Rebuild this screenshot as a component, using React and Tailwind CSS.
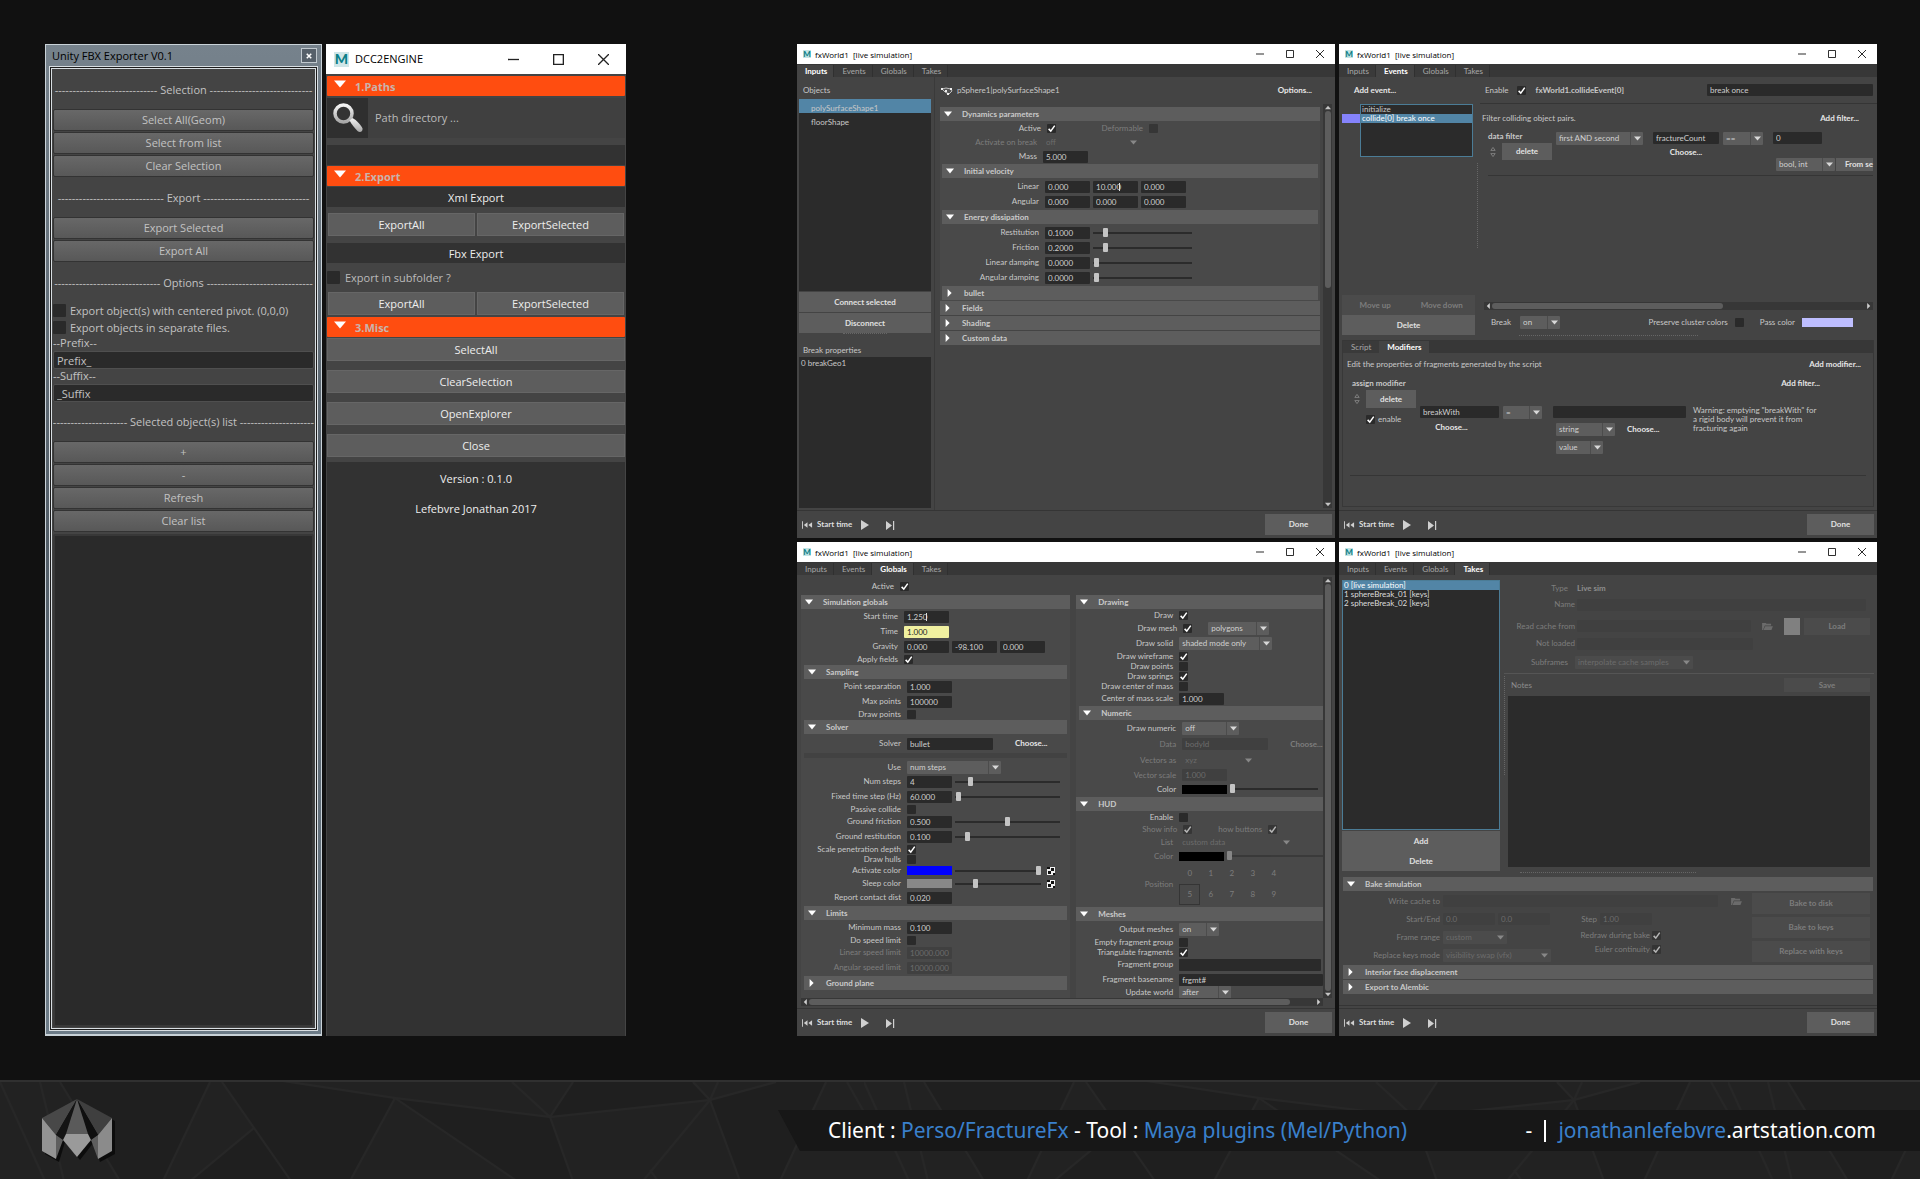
import clsx from "clsx";

/* ---------- shared bits ---------- */

function Triangle({ open = true, className }) {
  return (
    <svg viewBox="0 0 10 10" className={clsx("shrink-0", className)} aria-hidden="true">
      <path d={open ? "M0 2h10L5 8z" : "M2 0v10l5-5z"} fill="currentColor" />
    </svg>
  );
}

function WindowButtons({ size = "w-[30px]", icon = "h-2 w-2" }) {
  return (
    <div className="ml-auto flex h-full text-[#222]">
      <button aria-label="Minimize" className={clsx("flex items-center justify-center", size)}>
        <svg viewBox="0 0 10 10" className={icon}><path d="M0 5h10" stroke="currentColor" strokeWidth="1.2" /></svg>
      </button>
      <button aria-label="Maximize" className={clsx("flex items-center justify-center", size)}>
        <svg viewBox="0 0 10 10" className={icon}><path d="M.6.6h8.8v8.8H.6z" fill="none" stroke="currentColor" strokeWidth="1.2" /></svg>
      </button>
      <button aria-label="Close" className={clsx("flex items-center justify-center", size)}>
        <svg viewBox="0 0 10 10" className={icon}><path d="M0 0l10 10M10 0L0 10" stroke="currentColor" strokeWidth="1.2" /></svg>
      </button>
    </div>
  );
}

function Check({ id, on, label, disabled, big }) {
  const size = big ? "h-[13px] w-[13px]" : "h-[9px] w-[9px]";
  return (
    <span className={clsx("relative block shrink-0", size, disabled && "opacity-60")}>
      <input
        id={id}
        type="checkbox"
        aria-label={label}
        defaultChecked={on}
        disabled={disabled}
        className={clsx("peer block appearance-none rounded-[1px] bg-[#2a2a2a]", size)}
      />
      <svg viewBox="0 0 10 10" className="pointer-events-none absolute inset-0 hidden peer-checked:block" aria-hidden="true">
        <path d="M1.8 5.4l2.4 2.5L8.6 1.8" fill="none" stroke="#fff" strokeWidth="1.7" />
      </svg>
    </span>
  );
}

function Field({ id, value = "", label, className = "w-[45px]", disabled, yellow }) {
  return (
    <input
      id={id}
      type="text"
      aria-label={label}
      defaultValue={value}
      disabled={disabled}
      className={clsx(
        "h-3 min-w-0 rounded-[1px] px-[3px]",
        className,
        yellow ? "bg-[#f0f0a0] text-[#222]" : disabled ? "bg-[#404040] text-[#6c6c6c]" : "bg-[#2a2a2a] text-[#cfcfcf]"
      )}
    />
  );
}

// field that is being edited: a caret lies after the number
function EditedField({ caret, ...props }) {
  return (
    <span className="relative flex">
      <Field {...props} />
      <span className={clsx("absolute top-[2px] h-2 w-px bg-[#e0e0e0]", caret)} />
    </span>
  );
}

function Select({ id, value, label, className = "w-[45px]", disabled, faint }) {
  return (
    <span className={clsx("flex h-[13px] shrink-0 rounded-[1px]", className, disabled ? (faint ? "bg-[#4b4b4b] text-[#6c6c6c]" : "text-[#6c6c6c]") : "bg-[#5d5d5d] text-[#d0d0d0]")}>
      <select id={id} aria-label={label} disabled={disabled} className="min-w-0 flex-1 appearance-none bg-transparent px-[3px] opacity-100">
        <option>{value}</option>
      </select>
      <span className={clsx("flex w-[13px] items-center justify-center", disabled ? "text-[#888]" : "border-l border-[#4c4c4c] text-[#d8d8d8]")}>
        <Triangle className="h-[7px] w-[7px]" />
      </span>
    </span>
  );
}

function Slider({ id, value, label, disabled, className = "-ml-[3px] mr-[7px]" }) {
  return (
    <input
      id={id}
      type="range"
      aria-label={label}
      defaultValue={value}
      disabled={disabled}
      className={clsx(
        "h-[9px] min-w-0 flex-1 appearance-none bg-transparent",
        "[&::-webkit-slider-runnable-track]:h-[2px] [&::-webkit-slider-runnable-track]:bg-[#2b2b2b]",
        "[&::-webkit-slider-thumb]:-mt-[4px] [&::-webkit-slider-thumb]:h-[9px] [&::-webkit-slider-thumb]:w-[5px] [&::-webkit-slider-thumb]:appearance-none [&::-webkit-slider-thumb]:rounded-[1px] [&::-webkit-slider-thumb]:bg-[#c4c4c4]",
        disabled && "opacity-50",
        className
      )}
    />
  );
}

function Row({ label, id, h = "h-[15px]", w = "w-[97px]", gap = "gap-[6px]", disabled, children }) {
  return (
    <div className={clsx("flex items-center", h, gap)}>
      <label htmlFor={id} className={clsx("shrink-0 whitespace-nowrap text-right", w, disabled ? "text-[#7d7d7d]" : "text-[#c8c8c8]")}>
        {label}
      </label>
      {children}
    </div>
  );
}

function Header({ title, open = true, className }) {
  return (
    <button className={clsx("flex h-[14px] w-full shrink-0 items-center bg-[#5d5d5d] pl-1 text-left font-bold text-[#cacaca]", className)}>
      <Triangle open={open} className="h-2 w-2 text-white" />
      <span className="pl-[10px]">{title}</span>
    </button>
  );
}

function Btn({ children, className = "h-5", disabled }) {
  return (
    <button disabled={disabled} className={clsx("shrink-0 font-bold", disabled ? "bg-[#4b4b4b] text-[#7d7d7d]" : "bg-[#5d5d5d] text-[#e0e0e0]", className)}>
      {children}
    </button>
  );
}

function LinkBtn({ children, className, disabled }) {
  return <button disabled={disabled} className={clsx("shrink-0 whitespace-nowrap font-bold", disabled ? "text-[#7d7d7d]" : "text-[#e6e6e6]", className)}>{children}</button>;
}

function Spinner() {
  return (
    <svg viewBox="0 0 6 12" className="h-3 w-[6px] shrink-0" aria-hidden="true">
      <path d="M.8 4.4L3 1.4l2.2 3zM.8 7.6L3 10.6l2.2-3z" fill="none" stroke="#8b8b8b" strokeWidth=".8" />
    </svg>
  );
}

function Folder() {
  return (
    <svg viewBox="0 0 12 10" className="h-[9px] w-[11px] shrink-0" aria-hidden="true">
      <path d="M0 1h4l1 1h5v2H3L1 9H0zM3.4 4.6H12L10.4 9H1.6z" fill="#6b6b6b" />
    </svg>
  );
}

function Checker() {
  return (
    <svg viewBox="0 0 8 8" className="mr-3 h-2 w-2 shrink-0" aria-hidden="true">
      <path d="M0 0h8v8H0z" fill="#f2f2f2" />
      <path d="M0 0h3v2H0zM4 1h3v3H4zM1 4h3v3H1zM6 6h2v2H6z" fill="#111" />
    </svg>
  );
}

function Dots({ className }) {
  return <div className={clsx("border-dotted border-[#666]", className)} />;
}

function VScroll({ className }) {
  return (
    <div className={clsx("flex w-[9px] shrink-0 flex-col items-center bg-[#373737] text-[#c4c4c4]", className)}>
      <Triangle className="h-[7px] w-[6px] rotate-180" />
      {className ? <div className="w-[6px] flex-1 rounded-[3px] bg-[#5d5d5d]" /> : (
        <>
          <div className="w-[6px] flex-[5] rounded-[3px] bg-[#5d5d5d]" />
          <div className="flex-[6]" />
        </>
      )}
      <Triangle className="h-[7px] w-[6px]" />
    </div>
  );
}

function HScroll({ thumb, rest, className }) {
  return (
    <div className={clsx("flex h-2 shrink-0 items-center bg-[#373737] text-[#d0d0d0]", className)}>
      <Triangle open={false} className="h-[6px] w-2 rotate-180" />
      <div className={clsx("h-[6px] rounded-[3px] bg-[#5d5d5d]", thumb)} />
      <div className={rest} />
      <Triangle open={false} className="h-[6px] w-2" />
    </div>
  );
}

/* ---------- fxWorld window frame ---------- */

const TABS = ["Inputs", "Events", "Globals", "Takes"];

function FxWindow({ tab, children }) {
  return (
    <section className="flex min-w-0 flex-col overflow-hidden bg-[#444] font-[Lato,sans-serif] text-[8px] leading-[9px] text-[#c8c8c8]">
      <div className="flex h-5 shrink-0 items-center bg-white pl-[6px] text-black">
        <span className="flex h-2 w-2 items-center justify-center bg-[#c4e4e4] text-[8px] font-black text-[#0b7f88]">M</span>
        <h2 className="whitespace-pre pl-1 font-[Open_Sans,sans-serif] text-[8px]">fxWorld1{"  "}[live simulation]</h2>
        <WindowButtons />
      </div>
      <nav className="flex h-[13px] shrink-0 bg-[#373737]">
        {TABS.map((t) => (
          <button key={t} className={clsx("mt-px border-r border-[#303030] pl-2 pr-[6px]", t === tab ? "bg-[#444] font-bold text-white" : "bg-[#3a3a3a] text-[#a8a8a8]")}>
            {t}
          </button>
        ))}
      </nav>
      {children}
      <div className="flex h-7 shrink-0 items-center border-t border-[#353535] pl-[5px] pr-[3px]">
        <button className="flex items-center gap-1 font-bold text-[#dedede]">
          <svg viewBox="0 0 12 8" className="h-2 w-[11px]" aria-hidden="true"><path d="M0 0h1v8H0zM6 1v6L2 4zM11 1v6L7 4z" fill="#d0d0d0" /></svg>
          Start time
        </button>
        <button aria-label="Play" className="pl-[9px] pt-px">
          <svg viewBox="0 0 8 10" className="h-[10px] w-2"><path d="M0 0v10l8-5z" fill="#d0d0d0" /></svg>
        </button>
        <button aria-label="Step forward" className="pl-[17px] pt-px">
          <svg viewBox="0 0 9 9" className="h-[9px] w-[9px]"><path d="M0 0v9l6-4.500zM7 0h1.200v9H7z" fill="#d0d0d0" /></svg>
        </button>
        <Btn className="ml-auto h-[21px] w-[67px]">Done</Btn>
      </div>
    </section>
  );
}

/* ---------- Inputs ---------- */

function InputsWindow() {
  const damping = [
    ["Restitution", "0.1000", 11],
    ["Friction", "0.2000", 11],
    ["Linear damping", "0.0000", 1],
    ["Angular damping", "0.0000", 1],
  ];
  return (
    <FxWindow tab="Inputs">
      <div className="flex min-h-0 flex-1">
        <div className="ml-[2px] flex w-[132px] flex-col pb-[2px]">
          <div className="flex h-[22px] items-center pl-1 pt-1">Objects</div>
          <ul className="flex-1 bg-[#2b2b2b]">
            <li className="flex h-[14px] items-center bg-[#5285a6] pl-3 pt-1">polySurfaceShape1</li>
            <li className="flex h-[14px] items-center pl-3 pt-1">floorShape</li>
          </ul>
          <Btn className="mt-px h-5">Connect selected</Btn>
          <Btn className="mt-px h-5">Disconnect</Btn>
          <Dots className="mx-auto w-11 border-t" />
          <div className="flex h-[23px] items-center pl-1 pt-[10px]">Break properties</div>
          <ul className="h-[151px] bg-[#2b2b2b] p-[2px]">
            <li>0 breakGeo1</li>
          </ul>
        </div>
        <div className="mx-[3px] w-px bg-[#3a3a3a]" />
        <div className="flex min-w-0 flex-1 flex-col pr-[3px]">
          <div className="flex h-[27px] items-center gap-1 pl-[3px]">
            <svg viewBox="0 0 12 8" className="h-2 w-3" aria-hidden="true">
              <path d="M1 2l4-1 5 1 1 2-3 3-4-2z" fill="#555" stroke="#ddd" strokeWidth=".8" />
              <path d="M0 1h2v2H0zM4 3h2v2H4zM9 1h2v2H9zM6 6h2v2H6z" fill="#eee" />
            </svg>
            <span>pSphere1|polySurfaceShape1</span>
            <LinkBtn className="ml-auto mr-5">Options...</LinkBtn>
          </div>
          <div className="flex min-h-0 flex-1 pb-[2px]">
            <div className="min-w-0 flex-1 pl-[2px] pr-[3px] pt-[3px]">
              <div className="bg-[#494949]">
                <Header title="Dynamics parameters" />
                <div className="flex pt-px">
                  <Row label="Active" id="in-active" w="w-[101px]" h="h-[13px]"><Check id="in-active" on /></Row>
                  <Row label="Deformable" id="in-deform" w="w-[87px]" h="h-[13px]" disabled><Check id="in-deform" disabled /></Row>
                </div>
                <Row label="Activate on break" id="in-break" h="h-[14px]" disabled>
                  <Select id="in-break" value="off" disabled className="w-[97px]" />
                </Row>
                <Row label="Mass" id="in-mass"><Field id="in-mass" value="5.000" /></Row>
                <div className="flex flex-col gap-px px-[2px] pb-px">
                  <Header title="Initial velocity" />
                  <div>
                    <Row label="Linear" id="in-lin">
                      <div className="flex gap-[3px]">
                        <Field id="in-lin" value="0.000" />
                        <EditedField label="Linear y" value="10.000" caret="left-[26px]" />
                        <Field label="Linear z" value="0.000" />
                      </div>
                    </Row>
                    <Row label="Angular" id="in-ang">
                      <div className="flex gap-[3px]">
                        <Field id="in-ang" value="0.000" />
                        <Field label="Angular y" value="0.000" />
                        <Field label="Angular z" value="0.000" />
                      </div>
                    </Row>
                  </div>
                  <Header title="Energy dissipation" />
                  <div>
                    {damping.map(([name, value, pos]) => (
                      <Row key={name} label={name} id={"in-" + name}>
                        <div className="flex w-[147px] items-center gap-[3px]">
                          <Field id={"in-" + name} value={value} />
                          <Slider label={name + " slider"} value={pos} className="mr-0" />
                        </div>
                      </Row>
                    ))}
                  </div>
                  <Header title="bullet" open={false} />
                </div>
              </div>
              <div className="flex flex-col gap-px">
                <Header title="Fields" open={false} />
                <Header title="Shading" open={false} />
                <Header title="Custom data" open={false} />
              </div>
            </div>
            <VScroll />
          </div>
        </div>
      </div>
    </FxWindow>
  );
}

/* ---------- Events ---------- */

function EventsWindow() {
  return (
    <FxWindow tab="Events">
      <div className="flex min-h-0 flex-1">
        <div className="ml-[3px] flex w-[133px] flex-col">
          <div className="flex h-[27px] items-center pl-3"><LinkBtn>Add event...</LinkBtn></div>
          <div className="flex">
            <div className="w-[18px] pt-[10px]"><div className="h-[9px] bg-[#8583fc]" /></div>
            <ul className="mr-[2px] h-[53px] flex-1 border border-[#4b7c96] bg-[#2b2b2b]">
              <li className="h-[9px] px-px">initialize</li>
              <li className="h-[9px] bg-[#5285a6] px-px text-white">collide[0] break once</li>
            </ul>
          </div>
          <div className="mt-auto grid grid-cols-2">
            <Btn disabled>Move up</Btn>
            <Btn disabled>Move down</Btn>
          </div>
          <Btn>Delete</Btn>
        </div>
        <div className="flex w-[5px] flex-col items-center"><Dots className="mt-[86px] h-[85px] border-l" /></div>
        <div className="flex min-w-0 flex-1 flex-col overflow-hidden">
          <div className="flex h-[27px] items-center border-b border-[#353535] pl-[5px] pr-1">
            <label htmlFor="ev-on" className="pr-2">Enable</label>
            <Check id="ev-on" on />
            <span className="pl-[10px] font-bold">fxWorld1.collideEvent[0]</span>
            <Field label="Event name" value="break once" className="ml-auto w-[166px]" />
          </div>
          <div className="flex h-7 items-center pl-[2px] pr-[18px]">
            <span>Filter colliding object pairs.</span>
            <LinkBtn className="ml-auto">Add filter...</LinkBtn>
          </div>
          <div className="ml-2 mr-1 flex h-11 items-start gap-1 border-b border-[#353535]">
            <div className="shrink-0">
              <div className="font-bold">data filter</div>
              <div className="flex items-center gap-[6px] pl-[2px] pt-[2px]">
                <Spinner />
                <Btn className="h-[17px] w-[50px]">delete</Btn>
              </div>
            </div>
            <Select label="Filter target" value="first AND second" className="w-[87px]" />
            <div className="flex shrink-0 flex-col items-center gap-1 pl-[6px]">
              <Field label="Attribute" value="fractureCount" className="w-[66px]" />
              <LinkBtn>Choose...</LinkBtn>
            </div>
            <Select label="Operator" value="==" className="w-10" />
            <div className="flex min-w-0 flex-1 flex-col gap-[14px] pl-[6px]">
              <Field label="Filter value" value="0" className="w-[49px]" />
              <div className="flex gap-px pl-[3px]">
                <Select label="Value type" value="bool, int" className="w-[59px]" />
                <Btn className="h-[13px] flex-1 whitespace-nowrap text-right">From se</Btn>
              </div>
            </div>
          </div>
          <HScroll className="ml-1 mr-1 mt-auto" thumb="flex-[62]" rest="flex-[38]" />
          <div className="flex h-[25px] items-center pl-[11px] pr-6">
            <label htmlFor="ev-break" className="pr-[9px]">Break</label>
            <Select id="ev-break" value="on" className="w-10" />
            <label htmlFor="ev-keep" className="ml-auto pr-[7px]">Preserve cluster colors</label>
            <Check id="ev-keep" />
            <span className="pl-4 pr-[7px]">Pass color</span>
            <button aria-label="Pass color" className="h-[9px] w-[51px] bg-[#bebeff]" />
          </div>
        </div>
      </div>
      <Dots className="mx-auto mb-1 w-[179px] border-t" />
      <div className="mx-[3px] mb-[3px] flex h-[167px] flex-col border border-t-0 border-[#383838]">
        <nav className="flex h-[13px] shrink-0 bg-[#373737]">
          <button className="mt-px bg-[#3a3a3a] px-2 text-[#a8a8a8]">Script</button>
          <button className="mt-px bg-[#444] px-2 font-bold text-white">Modifiers</button>
        </nav>
        <div className="flex h-[22px] items-center pl-1 pr-3">
          <span>Edit the properties of fragments generated by the script</span>
          <LinkBtn className="ml-auto">Add modifier...</LinkBtn>
        </div>
        <div className="mx-[7px] flex h-[101px] flex-col border-b border-[#353535]">
          <div className="flex h-[13px] items-end pl-[2px] pr-[46px] font-bold">
            <span>assign modifier</span>
            <LinkBtn className="ml-auto">Add filter...</LinkBtn>
          </div>
          <div className="flex gap-1">
            <div className="pl-1">
              <div className="flex items-center gap-[6px] pt-[2px]">
                <Spinner />
                <Btn className="h-[18px] w-[50px]">delete</Btn>
              </div>
              <div className="flex items-center gap-[3px] pl-3 pt-[7px]">
                <Check id="ev-mod" on />
                <label htmlFor="ev-mod">enable</label>
              </div>
            </div>
            <div className="flex flex-col items-center gap-[5px] pt-[18px]">
              <Field label="Assigned attribute" value="breakWith" className="w-[79px]" />
              <LinkBtn className="mr-4">Choose...</LinkBtn>
            </div>
            <div className="pt-[18px]"><Select label="Assignment" value="=" className="w-[39px]" /></div>
            <div className="flex flex-col gap-[5px] pl-[7px] pt-[18px]">
              <Field label="Assigned value" className="w-[133px]" />
              <div className="flex items-center gap-3 pl-[3px]">
                <Select label="Type" value="string" className="w-[59px]" />
                <LinkBtn>Choose...</LinkBtn>
              </div>
              <div className="pl-[3px]"><Select label="Source" value="value" className="w-[47px]" /></div>
            </div>
            <p className="w-[130px] pl-[3px] pt-[18px]">Warning: emptying "breakWith" for a rigid body will prevent it from fracturing again</p>
          </div>
        </div>
      </div>
    </FxWindow>
  );
}

/* ---------- Globals ---------- */

function GlobalsWindow() {
  return (
    <FxWindow tab="Globals">
      <div className="flex min-h-0 flex-1 pr-[3px]">
        <div className="flex min-w-0 flex-1 flex-col overflow-hidden">
          <Row label="Active" id="gl-active" h="h-5 pt-[2px]"><Check id="gl-active" on /></Row>
          <div className="ml-1 grid min-h-0 flex-1 grid-cols-[12fr_11fr] gap-[6px] overflow-hidden">
            <div className="min-w-0 bg-[#494949]">
              <Header title="Simulation globals" />
              <Row label="Start time" id="gl-start"><EditedField id="gl-start" value="1.250" caret="left-[22px]" /></Row>
              <Row label="Time" id="gl-time"><Field id="gl-time" value="1.000" yellow /></Row>
              <Row label="Gravity" id="gl-grav">
                <div className="flex gap-[3px]">
                  <Field id="gl-grav" value="0.000" />
                  <Field label="Gravity y" value="-98.100" />
                  <Field label="Gravity z" value="0.000" />
                </div>
              </Row>
              <Row label="Apply fields" id="gl-fields" h="h-[10px]"><Check id="gl-fields" on /></Row>
              <div className="px-[3px]">
                <Header title="Sampling" className="mt-px" />
                <Row label="Point separation" id="gl-sep"><Field id="gl-sep" value="1.000" /></Row>
                <Row label="Max points" id="gl-max"><Field id="gl-max" value="100000" /></Row>
                <Row label="Draw points" id="gl-dp" h="h-[10px]"><Check id="gl-dp" /></Row>
                <Header title="Solver" className="mb-[2px] mt-px" />
                <Row label="Solver" id="gl-solver">
                  <Field id="gl-solver" value="bullet" className="w-[86px]" />
                  <LinkBtn className="pl-4">Choose...</LinkBtn>
                </Row>
                <div className="my-[2px] h-[5px] bg-[#424242]" />
                <Row label="Use" id="gl-use" h="h-[14px]"><Select id="gl-use" value="num steps" className="w-[94px]" /></Row>
                <Row label="Num steps" id="gl-num"><Field id="gl-num" value="4" /><Slider label="Num steps slider" value={13} /></Row>
                <Row label="Fixed time step (Hz)" id="gl-fix"><Field id="gl-fix" value="60.000" /><Slider label="Fixed time step slider" value={1} /></Row>
                <Row label="Passive collide" id="gl-pass" h="h-[10px]"><Check id="gl-pass" /></Row>
                <Row label="Ground friction" id="gl-fric"><Field id="gl-fric" value="0.500" /><Slider label="Ground friction slider" value={50} /></Row>
                <Row label="Ground restitution" id="gl-rest"><Field id="gl-rest" value="0.100" /><Slider label="Ground restitution slider" value={10} /></Row>
                <Row label="Scale penetration depth" id="gl-pen" h="h-[10px]"><Check id="gl-pen" on /></Row>
                <Row label="Draw hulls" id="gl-hull" h="h-[10px]"><Check id="gl-hull" /></Row>
                <Row label="Activate color" id="gl-act" h="h-[13px]">
                  <button id="gl-act" className="h-[9px] w-[45px] bg-[#0000ff]" />
                  <Slider label="Activate color value" value={100} className="-ml-[3px]" />
                  <Checker />
                </Row>
                <Row label="Sleep color" id="gl-sleep" h="h-[13px]">
                  <button id="gl-sleep" className="h-[9px] w-[45px] bg-[#888]" />
                  <Slider label="Sleep color value" value={22} className="-ml-[3px]" />
                  <Checker />
                </Row>
                <Row label="Report contact dist" id="gl-rep"><Field id="gl-rep" value="0.020" /></Row>
                <Header title="Limits" className="mt-px" />
                <Row label="Minimum mass" id="gl-mass"><Field id="gl-mass" value="0.100" /></Row>
                <Row label="Do speed limit" id="gl-speed" h="h-[10px]"><Check id="gl-speed" /></Row>
                <Row label="Linear speed limit" id="gl-lsp" disabled><Field id="gl-lsp" value="10000.000" disabled /></Row>
                <Row label="Angular speed limit" id="gl-asp" disabled><Field id="gl-asp" value="10000.000" disabled /></Row>
                <Header title="Ground plane" open={false} className="mt-px" />
              </div>
            </div>
            <div className="min-w-0 bg-[#494949]">
              <Header title="Drawing" />
              <Row label="Draw" id="gr-draw" h="h-3"><Check id="gr-draw" on /></Row>
              <Row label="Draw mesh" id="gr-mesh" w="w-[101px]" h="h-[14px]">
                <Check id="gr-mesh" on />
                <div className="pl-[10px]"><Select label="Mesh style" value="polygons" className="w-[61px]" /></div>
              </Row>
              <Row label="Draw solid" id="gr-solid" h="h-4"><Select id="gr-solid" value="shaded mode only" className="w-[93px]" /></Row>
              <Row label="Draw wireframe" id="gr-wire" h="h-[10px]"><Check id="gr-wire" on /></Row>
              <Row label="Draw points" id="gr-pts" h="h-[10px]"><Check id="gr-pts" /></Row>
              <Row label="Draw springs" id="gr-spr" h="h-[10px]"><Check id="gr-spr" on /></Row>
              <Row label="Draw center of mass" id="gr-com" h="h-[10px]"><Check id="gr-com" /></Row>
              <Row label="Center of mass scale" id="gr-cms"><Field id="gr-cms" value="1.000" /></Row>
              <div className="pl-[3px]">
                <Header title="Numeric" />
                <Row label="Draw numeric" id="gr-num" h="h-4"><Select id="gr-num" value="off" className="w-[57px]" /></Row>
                <Row label="Data" id="gr-data" h="h-4" disabled>
                  <Field id="gr-data" value="bodyId" disabled className="w-[86px]" />
                  <LinkBtn disabled className="pl-4">Choose...</LinkBtn>
                </Row>
                <Row label="Vectors as" id="gr-vec" h="h-4" disabled><Select id="gr-vec" value="xyz" disabled className="w-[73px]" /></Row>
                <Row label="Vector scale" id="gr-vs" h="h-[14px]" disabled><Field id="gr-vs" value="1.000" disabled /></Row>
                <Row label="Color" id="gr-col" h="h-[14px]">
                  <button id="gr-col" className="h-[9px] w-[45px] bg-black" />
                  <Slider label="Numeric color value" value={0} className="-ml-[3px] mr-[5px]" />
                </Row>
              </div>
              <Header title="HUD" className="mt-px" />
              <Row label="Enable" id="gr-hud" h="h-3"><Check id="gr-hud" /></Row>
              <Row label="Show info" id="gr-info" w="w-[101px]" h="h-3" disabled>
                <Check id="gr-info" on disabled />
                <label htmlFor="gr-btns" className="pl-5 text-[#7d7d7d]">how buttons</label>
                <Check id="gr-btns" on disabled />
              </Row>
              <Row label="List" id="gr-list" h="h-[14px]" disabled><Select id="gr-list" value="custom data" disabled className="w-[114px]" /></Row>
              <Row label="Color" id="gr-hcol" h="h-[14px]" disabled>
                <button id="gr-hcol" className="h-[9px] w-[45px] bg-black" />
                <Slider label="HUD color value" value={0} disabled className="-ml-[3px]" />
              </Row>
              <Row label="Position" h="h-[42px]" disabled>
                <div className="grid grid-cols-5">
                  {[0, 1, 2, 3, 4, 5, 6, 7, 8, 9].map((n) => (
                    <button key={n} disabled className={clsx("h-[21px] w-[21px] text-[#7d7d7d]", n === 5 && "border border-[#353535]")}>{n}</button>
                  ))}
                </div>
              </Row>
              <Header title="Meshes" className="mt-[2px]" />
              <Row label="Output meshes" id="gr-out" h="h-4"><Select id="gr-out" value="on" className="w-10" /></Row>
              <Row label="Empty fragment group" id="gr-emp" h="h-[10px]"><Check id="gr-emp" /></Row>
              <Row label="Triangulate fragments" id="gr-tri" h="h-[10px]"><Check id="gr-tri" on /></Row>
              <Row label="Fragment group" id="gr-grp"><Field id="gr-grp" className="mr-[2px] flex-1" /></Row>
              <Row label="Fragment basename" id="gr-base"><Field id="gr-base" value="frgmt#" className="flex-1" /></Row>
              <Row label="Update world" id="gr-upd" h="h-[10px]"><Select id="gr-upd" value="after" className="w-[52px]" /></Row>
            </div>
          </div>
          <HScroll className="mb-[2px] ml-1" thumb="flex-[19]" rest="flex-1" />
        </div>
        <VScroll className="mb-[10px] mt-[2px]" />
      </div>
    </FxWindow>
  );
}

/* ---------- Takes ---------- */

function TakesWindow() {
  return (
    <FxWindow tab="Takes">
      <div className="flex min-h-0 flex-1 pl-[3px] pr-[7px] pt-[5px]">
        <div className="flex w-[158px] flex-col">
          <ul className="flex-1 border border-[#4b7c96] bg-[#2b2b2b] text-[#dcdcdc]">
            <li className="h-[9px] bg-[#5285a6] px-px text-white">0 [live simulation]</li>
            <li className="h-[9px] px-px">1 sphereBreak_01 [keys]</li>
            <li className="h-[9px] px-px">2 sphereBreak_02 [keys]</li>
          </ul>
          <Btn className="mt-px h-5">Add</Btn>
          <Btn>Delete</Btn>
        </div>
        <div className="flex w-2 flex-col items-center"><Dots className="mt-[96px] h-[99px] border-l" /></div>
        <div className="flex min-w-0 flex-1 flex-col pb-1">
          <Row label="Type" h="h-[17px]" w="w-[60px]" gap="gap-[9px]" disabled><span className="font-bold text-[#8d8d8d]">Live sim</span></Row>
          <Row label="Name" id="tk-name" w="w-[67px]" gap="gap-[2px]" disabled><Field id="tk-name" disabled className="mr-1 flex-1" /></Row>
          <Row label="Read cache from" id="tk-read" h="mt-[3px] h-[22px]" w="w-[67px]" gap="gap-[2px]" disabled>
            <Field id="tk-read" disabled className="flex-1" />
            <button aria-label="Browse" className="mx-[9px]"><Folder /></button>
            <span className="h-[17px] w-4 bg-[#808080]" />
            <Btn disabled className="ml-[2px] h-[17px] w-[66px]">Load</Btn>
          </Row>
          <Row label="Not loaded" id="tk-not" h="h-[13px]" w="w-[67px]" gap="gap-[2px]" disabled><Field id="tk-not" disabled className="mr-[117px] flex-1" /></Row>
          <Row label="Subframes" id="tk-sub" h="mt-[5px] h-[14px]" w="w-[60px]" gap="gap-[7px]" disabled>
            <Select id="tk-sub" value="interpolate cache samples" disabled faint className="w-[118px]" />
          </Row>
          <div className="-mx-1 mt-1 h-px shrink-0 bg-[#555]" />
          <div className="flex h-[22px] items-center">
            <label htmlFor="tk-notes" className="pl-[3px] text-[#8d8d8d]">Notes</label>
            <Btn disabled className="ml-auto h-[14px] w-[86px]">Save</Btn>
          </div>
          <textarea id="tk-notes" className="flex-1 resize-none bg-[#2b2b2b]" />
        </div>
      </div>
      <Dots className="mx-auto mt-px w-[176px] border-t" />
      <div className="mb-[2px] flex flex-col gap-px border-b border-[#353535] px-1 pb-[11px] pt-1">
        <Header title="Bake simulation" />
        <div className="flex pr-[3px]">
          <div className="min-w-0 flex-1">
            <Row label="Write cache to" id="tk-write" h="h-[18px]" gap="gap-[3px]" disabled>
              <Field id="tk-write" disabled className="flex-1" />
              <button aria-label="Browse" className="mx-[10px]"><Folder /></button>
            </Row>
            <div className="flex">
              <div className="w-[208px]">
                <Row label="Start/End" id="tk-se" h="h-[18px]" gap="gap-[3px]" disabled>
                  <Field id="tk-se" value="0.0" disabled className="w-[52px]" />
                  <Field label="End" value="0.0" disabled className="w-[52px]" />
                </Row>
                <Row label="Frame range" id="tk-fr" h="h-[18px]" gap="gap-[3px]" disabled>
                  <Select id="tk-fr" value="custom" disabled faint className="w-16" />
                </Row>
                <Row label="Replace keys mode" id="tk-rk" h="h-[18px]" gap="gap-[3px]" disabled>
                  <Select id="tk-rk" value="visibility swap (vfx)" disabled faint className="w-[108px]" />
                </Row>
              </div>
              <div className="flex w-[110px] flex-col items-end">
                <div className="pr-[9px]">
                  <Row label="Step" id="tk-step" h="h-[18px]" w="" gap="gap-[3px]" disabled><Field id="tk-step" value="1.00" disabled className="w-[52px]" /></Row>
                </div>
                <Row label="Redraw during bake" id="tk-rd" h="h-[14px]" w="" gap="gap-[2px]" disabled><Check id="tk-rd" on disabled /></Row>
                <Row label="Euler continuity" id="tk-eu" h="h-[14px]" w="" gap="gap-[2px]" disabled><Check id="tk-eu" on disabled /></Row>
              </div>
            </div>
          </div>
          <div className="flex w-[118px] flex-col gap-[3px] pt-px">
            <Btn disabled className="h-[21px]">Bake to disk</Btn>
            <Btn disabled className="h-[21px]">Bake to keys</Btn>
            <Btn disabled className="h-[21px]">Replace with keys</Btn>
          </div>
        </div>
        <Header title="Interior face displacement" open={false} />
        <Header title="Export to Alembic" open={false} />
      </div>
    </FxWindow>
  );
}

/* ---------- Unity exporter ---------- */

function UnityTitle({ children, dashes }) {
  const line = "-".repeat(dashes);
  return <h3 className="flex h-[39px] items-center justify-center overflow-hidden whitespace-nowrap">{line} {children} {line}</h3>;
}

function UnityButton({ children }) {
  return (
    <button className="mb-px block h-[22px] w-full rounded-[2px] border border-[#333] bg-linear-to-b from-[#686868] to-[#585858] text-[#c2c2c2]">
      {children}
    </button>
  );
}

function UnityWindow() {
  return (
    <section className="flex w-[277px] shrink-0 flex-col border border-b-2 border-[#c9d2d8] bg-linear-to-b from-[#76828c] via-[#525d67] to-[#6d7c88] px-[3px] pb-[3px] font-[Open_Sans,sans-serif] text-[11px] leading-[14px] text-[#c2c2c2]">
      <div className="flex h-[21px] shrink-0 items-center pl-[3px] pr-px">
        <h2 className="text-[11px] text-black">Unity FBX Exporter V0.1</h2>
        <button aria-label="Close" className="ml-auto flex h-[15px] w-4 items-center justify-center border border-[#c0c8ce] bg-[#56606a] text-white">
          <svg viewBox="0 0 8 8" className="h-[6px] w-[6px]"><path d="M1 1l6 6M7 1L1 7" stroke="currentColor" strokeWidth="2" /></svg>
        </button>
      </div>
      <div className="flex flex-1 border border-[#d8dee2] bg-[#1c1c1c] p-px">
        <div className="flex min-w-0 flex-1 flex-col border border-[#d8dee2] bg-[#444] p-px">
          <UnityTitle dashes={29}>Selection</UnityTitle>
          <UnityButton>Select All(Geom)</UnityButton>
          <UnityButton>Select from list</UnityButton>
          <UnityButton>Clear Selection</UnityButton>
          <UnityTitle dashes={30}>Export</UnityTitle>
          <UnityButton>Export Selected</UnityButton>
          <UnityButton>Export All</UnityButton>
          <UnityTitle dashes={30}>Options</UnityTitle>
          <div className="flex h-[17px] items-center gap-1">
            <Check id="un-pivot" big />
            <label htmlFor="un-pivot">Export object(s) with centered pivot. (0,0,0)</label>
          </div>
          <div className="flex h-[17px] items-center gap-1">
            <Check id="un-sep" big />
            <label htmlFor="un-sep">Export objects in separate files.</label>
          </div>
          <label htmlFor="un-prefix" className="h-[15px]">--Prefix--</label>
          <input id="un-prefix" defaultValue="Prefix_" className="h-[18px] rounded-[2px] border border-[#4f4f4f] bg-[#2a2a2a] px-[3px]" />
          <label htmlFor="un-suffix" className="h-[15px]">--Suffix--</label>
          <input id="un-suffix" defaultValue="_Suffix" className="h-[18px] rounded-[2px] border border-[#4f4f4f] bg-[#2a2a2a] px-[3px]" />
          <UnityTitle dashes={21}>Selected object(s) list</UnityTitle>
          <UnityButton>+</UnityButton>
          <UnityButton>-</UnityButton>
          <UnityButton>Refresh</UnityButton>
          <UnityButton>Clear list</UnityButton>
          <div className="mt-px flex-1 rounded-[2px] border-2 border-[#383838] bg-[#2a2a2a]" />
        </div>
      </div>
    </section>
  );
}

/* ---------- DCC2ENGINE ---------- */

function DccHeader({ children, className }) {
  return (
    <button className={clsx("flex h-5 w-full shrink-0 items-center rounded-[1px] bg-[#ff4d10] pl-[7px] font-bold text-[#c9b4ac]", className)}>
      <Triangle className="mb-1 h-3 w-3 text-white" />
      <span className="pl-[9px] pt-[2px]">{children}</span>
    </button>
  );
}

function DccButton({ children }) {
  return <button className="h-[23px] border border-[#666] bg-[#5d5d5d] text-[#eee]">{children}</button>;
}

function DccWindow() {
  return (
    <section className="flex w-[300px] shrink-0 flex-col bg-[#444] font-[Open_Sans,sans-serif] text-[11px] leading-[14px] text-[#eee]">
      <div className="flex h-[30px] shrink-0 items-center bg-white pl-2 text-black">
        <span className="flex h-[15px] w-[15px] items-center justify-center bg-[#cfe6e8] font-[Lato,sans-serif] text-[14px] font-black text-[#0b7f88]">M</span>
        <h2 className="pl-[6px] text-[11px]">DCC2ENGINE</h2>
        <WindowButtons size="w-[45px]" icon="h-[11px] w-[11px]" />
      </div>
      <div className="flex flex-1 flex-col px-px pt-[2px]">
        <DccHeader>1.Paths</DccHeader>
        <div className="mt-[2px] flex h-10 items-center bg-[#404040]">
          <button aria-label="Browse" className="flex h-10 w-[41px] items-center justify-center bg-[#2f2f2f]">
            <svg viewBox="0 0 32 32" className="h-8 w-8">
              <defs>
                <linearGradient id="lens" x1="0" y1="0" x2="0" y2="1">
                  <stop offset="0" stopColor="#f4f4f4" />
                  <stop offset="1" stopColor="#a8a8a8" />
                </linearGradient>
              </defs>
              <circle cx="11.500" cy="11.500" r="8.500" fill="#333" stroke="url(#lens)" strokeWidth="3.500" />
              <path d="M17.500 18.500l3-2.500c4 2 9 7.500 10 10.500.5 3-2.500 4.500-5 2.500-3-3-6-7-8-10.500z" fill="url(#lens)" />
            </svg>
          </button>
          <span className="pl-[7px] text-[#bbb]">Path directory ...</span>
        </div>
        <div className="mb-px mt-[7px] h-5 bg-[#323232]" />
        <DccHeader>2.Export</DccHeader>
        <h3 className="mb-[6px] mt-px flex h-5 items-center justify-center bg-[#323232] pt-[2px]">Xml Export</h3>
        <div className="grid grid-cols-2 gap-[2px] px-px">
          <DccButton>ExportAll</DccButton>
          <DccButton>ExportSelected</DccButton>
        </div>
        <h3 className="mt-[7px] flex h-5 items-center justify-center bg-[#323232] pt-[2px]">Fbx Export</h3>
        <div className="flex h-[29px] items-center gap-[5px] text-[#bbb]">
          <Check id="dcc-sub" big />
          <label htmlFor="dcc-sub">Export in subfolder ?</label>
        </div>
        <div className="grid grid-cols-2 gap-[2px] px-px">
          <DccButton>ExportAll</DccButton>
          <DccButton>ExportSelected</DccButton>
        </div>
        <DccHeader className="mb-px mt-[2px]">3.Misc</DccHeader>
        <div className="flex flex-col gap-[9px] pb-[5px]">
          <DccButton>SelectAll</DccButton>
          <DccButton>ClearSelection</DccButton>
          <DccButton>OpenExplorer</DccButton>
          <DccButton>Close</DccButton>
        </div>
        <div className="flex-1 bg-[#323232] pt-[2px] text-center leading-[30px]">
          <p>Version : 0.1.0</p>
          <p>Lefebvre Jonathan 2017</p>
        </div>
      </div>
    </section>
  );
}

/* ---------- footer ---------- */

function FooterPattern() {
  return (
    <svg className="absolute inset-0 h-full w-full" aria-hidden="true">
      <defs>
        <pattern id="poly" width="864" height="99" patternUnits="userSpaceOnUse">
          <path d="M0 0h864v99H0z" fill="#222" />
          <path d="M60 0h150l-47 99h-43zM222 0h66l107 16-45 83h-59zM395 16l155 19 23 64h-56zM573 0h120l17 18-160 17zM254 46l37 53H190zM776 0h50l-46 99h-40l-30-81z" fill="#1f1f1f" />
          <g fill="none" stroke="#272727" strokeWidth="2">
            <path d="M270-3l125 19 155 19 160-17 66-18" />
            <path d="M210 0l-47 99M222 0l69 99M254 46l-64 53M395 16l-45 83M395 16l122 83M550 35l23 64M512 0l38 35 23-35M693 0l17 18-67 81M710 18l30 81M826 0l-46 99M60 0l60 99M0 0l45 99M40 0l24 99M847 0l17 30M650 88l8 11M710 18l8-18" />
          </g>
        </pattern>
      </defs>
      <rect width="100%" height="100%" fill="url(#poly)" />
    </svg>
  );
}

function Logo() {
  return (
    <svg viewBox="0 0 74 66" className="h-[66px] w-[74px]" aria-label="Logo">
      <path d="M38 4L3 23v33l14 8 6-20 15 18 14-18 6 20 15-8V23z" fill="#0c0c0c" />
      <path d="M35 1L0 20l14 17z" fill="#484848" />
      <path d="M35 1l35 19-14 17z" fill="#3f3f3f" />
      <path d="M35 1L14 37l7 5 3-6z" fill="#141414" />
      <path d="M35 1l21 36-7 5-3-6z" fill="#0f0f0f" />
      <path d="M35 1L24 36h22z" fill="#5a5a5a" />
      <path d="M24 36h22l3 6-14 17-14-17z" fill="#9a9a9a" />
      <path d="M0 20l14 17v24L0 53z" fill="#939393" />
      <path d="M70 20L56 37v24l14-8z" fill="#8b8b8b" />
      <path d="M14 37l7 5-7 19zM56 37l-7 5 7 19z" fill="#5e5e5e" />
    </svg>
  );
}

function Footer() {
  return (
    <footer className="relative flex h-[99px] shrink-0 items-center overflow-hidden border-t-2 border-[#303030] bg-[#222]">
      <FooterPattern />
      <div className="relative pl-[42px]"><Logo /></div>
      <div className="relative ml-[662px] flex h-[41px] flex-1 items-center bg-[#171717] pl-[50px] pr-11 font-[Noto_Sans,sans-serif] text-[21px] leading-none text-white [clip-path:polygon(0_0,100%_0,100%_100%,22px_100%)]">
        <p>
          Client : <span className="text-[#3a80cc]">Perso/FractureFx</span> - Tool : <span className="text-[#3a80cc]">Maya plugins (Mel/Python)</span>
        </p>
        <p className="ml-auto flex items-center">
          <span className="pr-3">-</span>
          <span className="mr-3 h-[22px] w-[2px] bg-white" />
          <a href="https://jonathanlefebvre.artstation.com"><span className="text-[#3a80cc]">jonathanlefebvre</span>.artstation.com</a>
        </p>
      </div>
    </footer>
  );
}

export default function App() {
  return (
    <div className="flex min-h-screen flex-col bg-[#111]">
      <main className="flex flex-1 gap-1 py-11 pl-[45px] pr-[43px]">
        <UnityWindow />
        <DccWindow />
        <div className="ml-[167px] grid min-w-0 flex-1 grid-cols-2 grid-rows-2 gap-1">
          <InputsWindow />
          <EventsWindow />
          <GlobalsWindow />
          <TakesWindow />
        </div>
      </main>
      <Footer />
    </div>
  );
}
